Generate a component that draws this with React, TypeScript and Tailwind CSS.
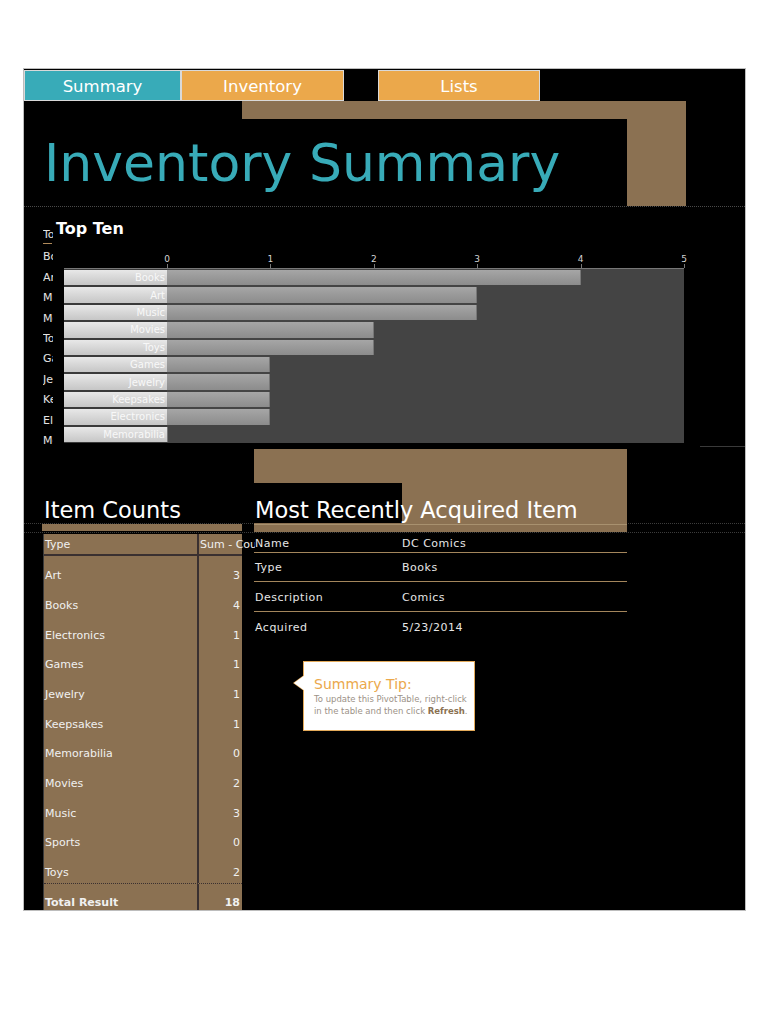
import React from "react";

const font = { fontFamily: '"DejaVu Sans", "Liberation Sans", sans-serif' };

const topTen: [string, number][] = [
  ["Books", 4],
  ["Art", 3],
  ["Music", 3],
  ["Movies", 2],
  ["Toys", 2],
  ["Games", 1],
  ["Jewelry", 1],
  ["Keepsakes", 1],
  ["Electronics", 1],
  ["Memorabilia", 0],
];

const counts: [string, number][] = [
  ["Art", 3],
  ["Books", 4],
  ["Electronics", 1],
  ["Games", 1],
  ["Jewelry", 1],
  ["Keepsakes", 1],
  ["Memorabilia", 0],
  ["Movies", 2],
  ["Music", 3],
  ["Sports", 0],
  ["Toys", 2],
];

const recent = [
  { label: "Name", value: "DC Comics", h: "h-[20px] pt-[3px]", line: true },
  { label: "Type", value: "Books", h: "h-[29px] pt-[2px]", line: true },
  { label: "Description", value: "Comics", h: "h-[30px] pt-[3px]", line: true },
  { label: "Acquired", value: "5/23/2014", h: "h-[30px] pt-[2px]", line: false },
];

const UNIT = 103.4;

const App = () => {
  return (
    <div className="min-h-[1024px] bg-white pt-[69px] pl-[24px]" style={font}>
      <div className="w-[721px] h-[841px] bg-black ring-1 ring-[#bdbdbd] overflow-hidden">
        {/* Tabs */}
        <div className="flex h-[32px] pt-[1px]">
          <div className="w-[157px] h-full bg-[#38abb8] border border-[#d9d9d9] flex items-center justify-center pt-[3px] text-white text-[16.5px]">
            Summary
          </div>
          <div className="w-[163px] h-full bg-[#eba84b] border border-[#d9d9d9] flex items-center justify-center pt-[3px] text-white text-[16.5px]">
            Inventory
          </div>
          <div className="w-[34px]" />
          <div className="w-[162px] h-full bg-[#eba84b] border border-[#d9d9d9] flex items-center justify-center pt-[3px] text-white text-[16.5px]">
            Lists
          </div>
        </div>

        {/* Title */}
        <div className="relative h-[106px] border-b border-dotted border-[#4a4a4a]">
          <div className="absolute left-[218px] top-0 w-[444px] h-[105px] bg-[#8b7152]" />
          <div className="absolute left-0 top-[18px] w-[603px] h-[87px] bg-black" />
          <h1 className="relative pl-[20px] pt-[36px] text-[52px] leading-none text-[#38abb8]">
            Inventory Summary
          </h1>
        </div>

        {/* Top Ten chart */}
        <div className="relative flex h-[240px] pl-[19px]">
          <div className="w-[10px] overflow-hidden pt-[19px] text-[11px] leading-[20.4px] text-[#e4e4e4] whitespace-nowrap">
            <div className="w-[9px] border-b border-[#b08a5a] leading-[17px] mb-[3.4px]">Top Ten</div>
            {topTen.map(([name]) => (
              <div key={name}>{name}</div>
            ))}
          </div>
          <div className="ml-[3px] w-[628px] pt-[12px]">
            <div className="text-[16px] leading-[20px] font-bold text-white">Top Ten</div>
            <div className="relative ml-[8px] w-[620px] h-[30px] border-b border-[#777]">
              {[0, 1, 2, 3, 4, 5].map((i) => (
                <React.Fragment key={i}>
                  <span
                    className="absolute top-[15px] -translate-x-1/2 text-[9px] leading-[10px] text-[#d4d4d4]"
                    style={{ left: 103 + UNIT * i }}
                  >
                    {i}
                  </span>
                  <span
                    className="absolute bottom-0 w-px h-[4px] bg-[#777]"
                    style={{ left: 103 + UNIT * i }}
                  />
                </React.Fragment>
              ))}
            </div>
            <div className="ml-[8px] w-[620px] bg-[#3a3a3a]">
              {topTen.map(([name, v]) => (
                <div key={name} className="flex h-[17.4px]">
                  <div className="w-[103px] h-full py-[1px]">
                    <div className="h-full bg-gradient-to-b from-[#e8e8e8] to-[#c6c6c6] flex items-center justify-end pr-[2px] text-[10px] text-[#f8f8f8]">
                      {name}
                    </div>
                  </div>
                  <div className="flex-1 h-full bg-[#444] py-[1px]">
                    <div
                      className="h-full bg-gradient-to-b from-[#a6a6a6] to-[#8c8c8c] border-r border-[#777]"
                      style={{ width: v * UNIT }}
                    />
                  </div>
                </div>
              ))}
            </div>
          </div>
          <div className="absolute right-0 bottom-0 w-[45px] h-px bg-[#3a3a3a]" />
        </div>

        {/* Lower section */}
        <div className="relative flex">
          <div className="absolute left-0 top-[76px] w-full border-t border-dotted border-[#3c3c3c]" />
          <div className="absolute left-0 top-[85px] w-full border-t border-dotted border-[#3c3c3c]" />

          {/* Item Counts */}
          <div className="relative ml-[18px] w-[200px]">
            <div className="h-[77px] pt-[49px] pl-[2px] text-[22.5px] leading-[28px] text-white">
              Item Counts
            </div>
            <div className="h-[7px] bg-[#8b7152]" />
            <div className="h-[3px]" />
            <div className="ml-[1px] bg-[#8b7152] border-l border-[#3a3a3a] text-[11px] text-[#f0f0f0]">
              <div className="flex h-[22px] border-b-2 border-[#3a3030]">
                <div className="w-[155px] shrink-0 border-r-2 border-[#3a3030] pl-[1px] flex items-end pb-[1px]">
                  Type
                </div>
                <div className="w-[56px] shrink-0 pl-[1px] flex items-end pb-[1px] whitespace-nowrap overflow-hidden">
                  Sum - Count
                </div>
              </div>
              {counts.map(([name, v]) => (
                <div key={name} className="flex h-[29.7px]">
                  <div className="w-[155px] shrink-0 border-r-2 border-[#3a3030] pl-[1px] flex items-end pb-[1px]">
                    {name}
                  </div>
                  <div className="flex-1 pr-[2px] flex items-end justify-end pb-[1px]">{v}</div>
                </div>
              ))}
              <div className="flex h-[30px] border-t border-dotted border-[#3a3030] font-bold">
                <div className="w-[155px] shrink-0 border-r-2 border-[#3a3030] pl-[1px] flex items-end pb-[1px]">
                  Total Result
                </div>
                <div className="flex-1 pr-[2px] flex items-end justify-end pb-[1px]">18</div>
              </div>
            </div>
          </div>

          {/* Most Recently Acquired Item */}
          <div className="relative ml-[12px] w-[373px]">
            <div className="relative mt-[2px] h-[83px] bg-[#8b7152]">
              <div className="absolute left-0 top-[34px] w-[148px] h-[40px] bg-black" />
              <div className="absolute left-0 top-[75px] w-full h-px bg-[#a8916f]" />
              <h2 className="relative pt-[47px] pl-[1px] text-[22.5px] leading-[28px] text-white whitespace-nowrap">
                Most Recently Acquired Item
              </h2>
            </div>
            <div className="h-px" />
            {recent.map((r) => (
              <div
                key={r.label}
                className={`flex items-center ${r.h} ${r.line ? "border-b border-[#a4865c]" : ""} text-[11px] tracking-[0.5px] text-[#e6e6e6]`}
              >
                <div className="w-[148px] pl-[1px]">{r.label}</div>
                <div>{r.value}</div>
              </div>
            ))}

            {/* Tip callout */}
            <div className="absolute left-[49px] top-[214px] w-[172px] h-[70px] bg-white border border-[#e3aa5a]">
              <div className="absolute -left-[11px] top-[13px] w-0 h-0 border-y-[8px] border-y-transparent border-r-[11px] border-r-[#e3aa5a]" />
              <div className="absolute -left-[10px] top-[13px] w-0 h-0 border-y-[8px] border-y-transparent border-r-[11px] border-r-white" />
              <div className="pl-[10px] pt-[14px] text-[14px] leading-[16px] text-[#eba84b]">Summary Tip:</div>
              <div className="pl-[10px] pt-[1px] text-[8.5px] leading-[12px] text-[#9c9287] whitespace-nowrap">
                To update this PivotTable, right-click
                <br />
                in the table and then click <span className="font-bold text-[#8b7152]">Refresh</span>.
              </div>
            </div>
          </div>
        </div>
      </div>
    </div>
  );
};

export default App;
